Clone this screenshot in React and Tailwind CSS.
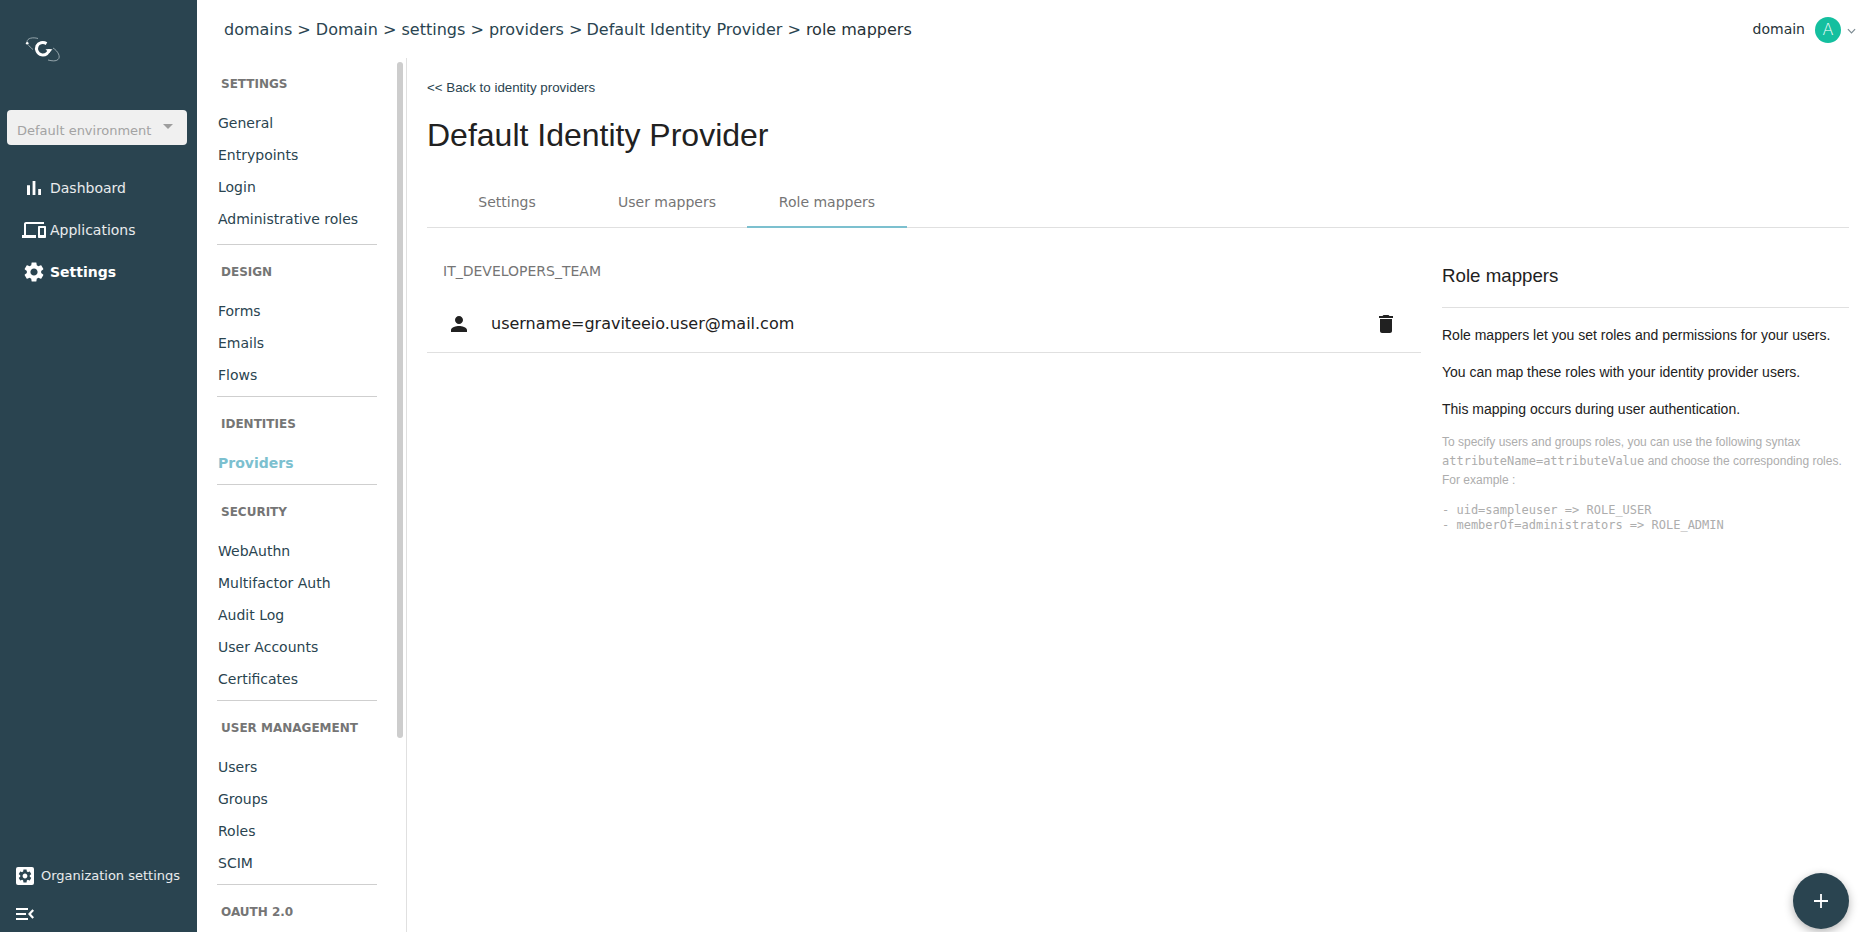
import React from 'react'

const gearPath = "M19.14 12.94c.04-.3.06-.61.06-.94 0-.32-.02-.64-.07-.94l2.03-1.58c.18-.14.23-.41.12-.61l-1.92-3.32c-.12-.22-.37-.29-.59-.22l-2.39.96c-.5-.38-1.03-.7-1.62-.94l-.36-2.54c-.04-.24-.24-.41-.48-.41h-3.84c-.24 0-.43.17-.47.41l-.36 2.54c-.59.24-1.13.57-1.62.94l-2.39-.96c-.22-.08-.47 0-.59.22L2.74 8.87c-.12.21-.08.47.12.61l2.03 1.58c-.05.3-.09.63-.09.94s.02.64.07.94l-2.03 1.58c-.18.14-.23.41-.12.61l1.92 3.32c.12.22.37.29.59.22l2.39-.96c.5.38 1.03.7 1.62.94l.36 2.54c.05.24.24.41.48.41h3.84c.24 0 .44-.17.47-.41l.36-2.54c.59-.24 1.13-.56 1.62-.94l2.39.96c.22.08.47 0 .59-.22l1.92-3.32c.12-.22.07-.47-.12-.61l-2.01-1.58zM12 15.6c-1.98 0-3.6-1.62-3.6-3.6s1.62-3.6 3.6-3.6 3.6 1.62 3.6 3.6-1.62 3.6-3.6 3.6z"

const Icon = ({ d, className }) => (
  <svg viewBox="0 0 24 24" fill="currentColor" className={className}>
    <path d={d} />
  </svg>
)

const sections = [
  { title: 'SETTINGS', items: ['General', 'Entrypoints', 'Login', 'Administrative roles'] },
  { title: 'DESIGN', items: ['Forms', 'Emails', 'Flows'] },
  { title: 'IDENTITIES', items: ['Providers'], active: 'Providers' },
  { title: 'SECURITY', items: ['WebAuthn', 'Multifactor Auth', 'Audit Log', 'User Accounts', 'Certificates'] },
  { title: 'USER MANAGEMENT', items: ['Users', 'Groups', 'Roles', 'SCIM'] },
  { title: 'OAUTH 2.0', items: [] },
]

const Logo = () => (
  <svg viewBox="0 0 36 26" className="w-[36px] h-[26px]" fill="none">
    <path d="M2 5 C2 1 8 0 13 1.5" stroke="#aebcc2" strokeWidth="0.8" />
    <circle cx="2.2" cy="6.2" r="1.3" fill="#fff" />
    <path d="M3 7.5 C4 9 6 11 8 12.5" stroke="#aebcc2" strokeWidth="0.8" />
    <path d="M28 11 C33 14 36 20 33 22.5 C31 24.5 27 24 23 23" stroke="#aebcc2" strokeWidth="0.8" />
    <path d="M21.5 6.6 C18 4.6 13.5 5.6 12 9 C10.5 12.5 12.5 17 16.5 17.8 C20.5 18.5 24 16 24.3 12.2" stroke="#fff" strokeWidth="3.1" />
    <path d="M20.5 12.2 H27.5 L24.2 16 Z" fill="#fff" />
  </svg>
)

const SideLink = ({ d, label, bold }) => (
  <div className="flex items-center h-[42px]">
    <div className="w-[50px] flex justify-end pr-[4px] shrink-0">
      <Icon d={d} className="w-[24px] h-[24px]" />
    </div>
    <span className={`text-[14px] ${bold ? 'font-bold text-white' : 'text-white/90'}`}>{label}</span>
  </div>
)

const App = () => {
  return (
    <div className="flex h-[932px] overflow-hidden bg-white font-['DejaVu_Sans',sans-serif] text-[#2a4450]">
      <aside className="w-[197px] shrink-0 bg-[#2a4450] flex flex-col text-white">
        <div className="pt-[37px] pl-[25px]">
          <Logo />
        </div>
        <div className="ml-[7px] w-[180px] mt-[47px] h-[35px] bg-[#f0f0f0] rounded flex items-center pl-[10px] pr-[14px] justify-between">
          <span className="text-[13px] text-[#a3a3a3] pt-[7px] whitespace-nowrap">Default environment</span>
          <span className="w-0 h-0 border-x-[5px] border-x-transparent border-t-[5px] border-t-[#9e9e9e] -mt-[3px]" />
        </div>
        <nav className="mt-[22px]">
          <SideLink d="M5 9.2h3V19H5zM10.6 5h2.8v14h-2.8zm5.6 8H19v6h-2.8z" label="Dashboard" />
          <SideLink d="M4 6h18V4H4c-1.1 0-2 .9-2 2v11H0v3h14v-3H4V6zm19 2h-6c-.55 0-1 .45-1 1v10c0 .55.45 1 1 1h6c.55 0 1-.45 1-1V9c0-.55-.45-1-1-1zm-1 9h-4v-7h4v7z" label="Applications" />
          <SideLink d={gearPath} label="Settings" bold />
        </nav>
        <div className="mt-auto pb-[6px]">
          <div className="flex items-center pl-[16px] h-[24px] gap-[7px]">
            <span className="w-[18px] h-[18px] bg-white rounded-[2px] flex items-center justify-center text-[#2a4450]">
              <Icon d={gearPath} className="w-[16px] h-[16px]" />
            </span>
            <span className="text-[13px] text-white/90 whitespace-nowrap">Organization settings</span>
          </div>
          <div className="pl-[16px] mt-[14px] h-[24px] flex items-center">
            <svg viewBox="0 0 18 12" className="w-[18px] h-[12px]" fill="none" stroke="#fff" strokeWidth="1.8">
              <path d="M0 1h12M0 6h10M0 11h12" />
              <path d="M17.2 2 L13.5 6 L17.2 10" strokeWidth="2.2" />
            </svg>
          </div>
        </div>
      </aside>

      <div className="flex-1 min-w-0 flex flex-col">
        <header className="h-[58px] shrink-0 flex items-center justify-between pl-[27px] pr-[3px] pt-px">
          <div className="text-[16px] whitespace-nowrap">
            domains &gt; Domain &gt; settings &gt; providers &gt; <span className="-ml-px">Default Identity Provider &gt; </span><span className="text-[#263238]">role mappers</span>
          </div>
          <div className="flex items-center">
            <span className="text-[14px] text-[#263238] mr-[10px]">domain</span>
            <span className="w-[26px] h-[26px] rounded-full bg-[#14bf9f] text-white flex items-center justify-center text-[16px] font-light">A</span>
            <svg viewBox="0 0 10 6" className="w-[9px] h-[6px] ml-[6px] mt-[3px]" fill="none" stroke="#7b8a92" strokeWidth="1.3">
              <path d="M1 1 L5 5 L9 1" />
            </svg>
          </div>
        </header>

        <div className="flex-1 min-h-0 flex">
          <div className="w-[210px] shrink-0 border-r border-[#e0e0e0] flex overflow-hidden">
            <nav className="w-[200px] shrink-0 pl-[20px] pr-[20px] pt-[17px]">
              {sections.map((s) => (
                <div key={s.title} className="border-b border-[#cfcfcf] pb-[5px] first:pb-[9px] mb-[18px] last:border-b-0">
                  <div className="text-[12px] font-bold text-[#757575] pl-[4px] h-[18px] leading-[18px] whitespace-nowrap mb-[14px]">{s.title}</div>
                  {s.items.map((item) => (
                    <div
                      key={item}
                      className={`h-[32px] pl-px leading-[32px] text-[14px] whitespace-nowrap ${item === s.active ? 'font-bold text-[#7cc0cf]' : ''}`}
                    >
                      {item}
                    </div>
                  ))}
                </div>
              ))}
            </nav>
            <div className="w-[6px] h-[676px] mt-[4px] rounded-full bg-[#cdcdcd] shrink-0" />
          </div>

          <main className="flex-1 min-w-0 pl-[20px] pr-[10px]">
            <a className="block mt-[22px] text-[13.33px] leading-[16px] font-['Liberation_Sans',sans-serif]">&lt;&lt; Back to identity providers</a>
            <h1 className="mt-[19px] text-[32px] leading-[40px] text-[#212121] font-['Liberation_Sans',sans-serif]">Default Identity Provider</h1>

            <div className="mt-[24px] flex h-[49px] border-b border-[#e0e0e0] text-[14px] text-[#757575]">
              <div className="w-[160px] flex items-center justify-center pb-px">Settings</div>
              <div className="w-[160px] flex items-center justify-center pb-px">User mappers</div>
              <div className="w-[160px] flex items-center justify-center border-b-2 border-[#7cc0cf] -mb-px">Role mappers</div>
            </div>

            <div className="flex">
              <div className="w-[994px] shrink-0">
                <div className="pl-[16px] mt-[34px] text-[14px] leading-[18px] text-[#757575]">IT_DEVELOPERS_TEAM</div>
                <div className="mt-[15px] h-[58px] border-b border-[#e0e0e0] flex items-center pl-[20px] pr-[23px] text-[#212121]">
                  <Icon d="M12 12c2.21 0 4-1.79 4-4s-1.79-4-4-4-4 1.79-4 4 1.79 4 4 4zm0 2c-2.67 0-8 1.34-8 4v2h16v-2c0-2.66-5.33-4-8-4z" className="w-[24px] h-[24px]" />
                  <span className="ml-[20px] text-[16px] flex-1">username=graviteeio.user@mail.com</span>
                  <Icon d="M6 19c0 1.1.9 2 2 2h8c1.1 0 2-.9 2-2V7H6v12zM19 4h-3.5l-1-1h-5l-1 1H5v2h14V4z" className="w-[24px] h-[24px]" />
                </div>
              </div>
              <div className="flex-1 min-w-0 ml-[21px] font-['Liberation_Sans',sans-serif] text-[#212121]">
                <div className="h-[80px] border-b border-[#e0e0e0] pt-[36px] text-[18.72px] leading-[24px]">Role mappers</div>
                <p className="mt-[18px] text-[14px] leading-[18px]">Role mappers let you set roles and permissions for your users.</p>
                <p className="mt-[19px] text-[14px] leading-[18px]">You can map these roles with your identity provider users.</p>
                <p className="mt-[19px] text-[14px] leading-[18px]">This mapping occurs during user authentication.</p>
                <p className="mt-[15px] text-[12px] leading-[19px] text-[#adadad]">
                  To specify users and groups roles, you can use the following syntax
                  <br />
                  <span className="font-['DejaVu_Sans_Mono',monospace]">attributeName=attributeValue</span> and choose the corresponding roles.
                  <br />
                  For example :
                </p>
                <pre className="mt-[13px] text-[12px] leading-[15px] text-[#adadad] font-['DejaVu_Sans_Mono',monospace]">{`- uid=sampleuser => ROLE_USER
- memberOf=administrators => ROLE_ADMIN`}</pre>
              </div>
            </div>
          </main>
        </div>
      </div>

      <button className="absolute right-[10px] bottom-[3px] w-[56px] h-[56px] rounded-full bg-[#2a4450] text-white flex items-center justify-center shadow-[0_3px_10px_rgba(0,0,0,0.3)]">
        <svg viewBox="0 0 14 14" className="w-[14px] h-[14px]" fill="none" stroke="#fff" strokeWidth="1.8">
          <path d="M7 0v14M0 7h14" />
        </svg>
      </button>
    </div>
  )
}

export default App
